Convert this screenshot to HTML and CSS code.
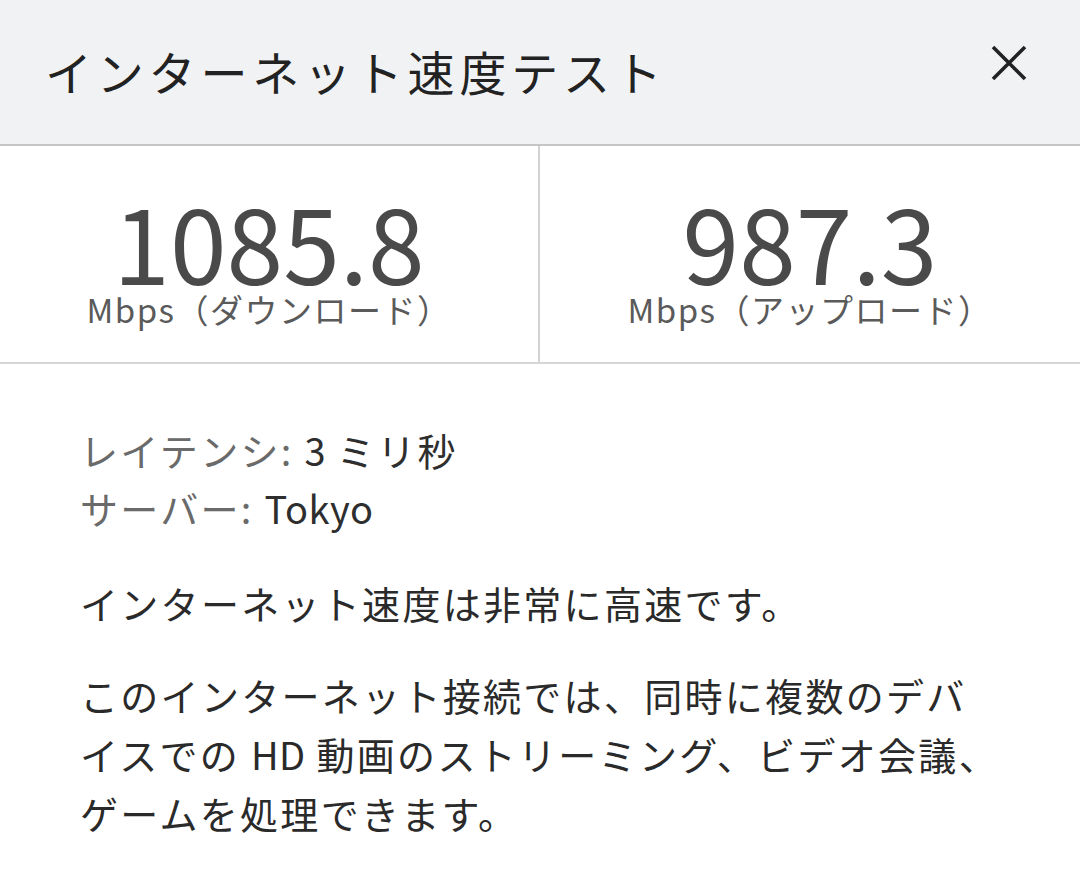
FILE: index.html
```html
<!DOCTYPE html>
<html lang="ja">
<head>
<meta charset="utf-8">
<title>インターネット速度テスト</title>
<link rel="stylesheet" href="styles.css">
</head>
<body>
<div class="panel">
  <header class="header">
    <h1 class="title">インターネット速度テスト</h1>
    <button class="close" aria-label="閉じる">
      <svg width="36" height="36" viewBox="0 0 36 36"><path d="M2 2 L34 34 M34 2 L2 34" stroke="#222" stroke-width="3.6" stroke-linecap="butt" fill="none"/></svg>
    </button>
  </header>
  <section class="stats">
    <div class="stat stat-left">
      <div class="value">1085.8</div>
      <div class="unit">Mbps（ダウンロード）</div>
    </div>
    <div class="stat">
      <div class="value">987.3</div>
      <div class="unit">Mbps（アップロード）</div>
    </div>
  </section>
  <section class="body">
    <div class="meta">
      <div class="meta-row"><span class="label">レイテンシ:</span> <span class="val"><span class="en">3</span> ミリ秒</span></div>
      <div class="meta-row"><span class="label">サーバー:</span> <span class="val en">Tokyo</span></div>
    </div>
    <p class="summary">インターネット速度は非常に高速です。</p>
    <p class="desc">このインターネット接続では、同時に複数のデバ<br>イスでの <span class="en">HD</span> 動画のストリーミング、ビデオ会議、<br>ゲームを処理できます。</p>
  </section>
</div>
</body>
</html>
```

FILE: styles.css
```css
* { box-sizing: border-box; }
html, body {
  margin: 0;
  padding: 0;
  background: #ffffff;
}
body {
  font-family: "Noto Sans CJK JP", "Noto Sans", sans-serif;
  color: #2a2a2a;
  width: 1080px;
  height: 878px;
  overflow: hidden;
}
.header {
  height: 146px;
  background: #f1f2f4;
  border-bottom: 2px solid #c4c5c7;
  display: flex;
  align-items: center;
  justify-content: space-between;
  padding: 0 53px 4px 45px;
}
.title {
  margin: 0;
  font-size: 47px;
  font-weight: 400;
  letter-spacing: 4.8px;
  color: #222;
  line-height: 1;
}
.close {
  border: 0;
  background: transparent;
  padding: 0;
  width: 36px;
  height: 36px;
  display: flex;
  margin-top: -14px;
}
.stats {
  display: grid;
  grid-template-columns: 540px 1fr;
  height: 218px;
  border-bottom: 2px solid #d6d6d6;
}
.stat {
  display: flex;
  flex-direction: column;
  align-items: center;
  padding-top: 45px;
  color: #4d4d4d;
}
.stat-left {
  border-right: 2px solid #d2d2d2;
}
.value {
  font-size: 102px;
  line-height: 100px;
  color: #4a4a4a;
}
.unit {
  font-size: 33px;
  line-height: 36px;
  color: #5a5a5a;
  letter-spacing: 1.5px;
}
.body {
  padding: 57px 20px 0 80px;
  font-size: 38px;
  line-height: 58px;
  letter-spacing: 2.3px;
}
.en { letter-spacing: 0.5px; }
.meta-row { white-space: nowrap; }
.label { color: #6a6a6a; }
.val { color: #2e2e2e; }
.summary {
  margin: 37px 0 0;
  color: #2a2a2a;
}
.desc {
  margin: 33px 0 0;
  color: #2a2a2a;
  line-height: 59px;
  white-space: nowrap;
}
```
